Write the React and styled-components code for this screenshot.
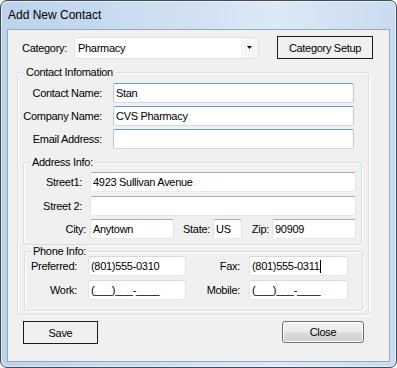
import React from "react";
import styled, { createGlobalStyle } from "styled-components";

const Global = createGlobalStyle`
  html, body { margin: 0; padding: 0; background: #fff; }
  body { font-family: "Liberation Sans", Arial, sans-serif; color: #000; }
  * { box-sizing: border-box; }
`;

const Window = styled.div`
  width: 397px;
  height: 368px;
  border: 1px solid #3e4a58;
  border-radius: 7px;
  background: linear-gradient(to right, #bcd3eb 0%, #cfe0f2 45%, #dce9f6 70%, #c8dbef 100%);
  box-shadow: inset 0 0 0 1px rgba(255, 255, 255, 0.55);
  padding: 0 6px 5px;
  display: flex;
  flex-direction: column;
  overflow: hidden;
`;

const TitleBar = styled.div`
  height: 28px;
  display: flex;
  align-items: center;
  padding-left: 1px;
  font-size: 12px;
`;

const Client = styled.div`
  flex: 1;
  border: 1px solid #97a9bc;
  background: #f0f0f0;
  font-size: 11px;
  letter-spacing: -0.3px;
`;

const CategoryRow = styled.div`
  display: flex;
  align-items: center;
  height: 23px;
  margin-top: 6px;
  padding-left: 14px;
`;

const CatLabel = styled.div`
  width: 52px;
`;

const Combo = styled.div`
  width: 185px;
  height: 22px;
  border: 1px solid #e3e3e3;
  background: #fff;
  display: flex;
  align-items: center;
  padding-left: 3px;
`;

const ComboText = styled.div`
  flex: 1;
`;

const ArrowBox = styled.div`
  width: 17px;
  height: 100%;
  display: flex;
  align-items: center;
  justify-content: center;
  background: #f7f7f7;
`;

const FlatButton = styled.div`
  width: ${(p) => p.$w}px;
  height: 23px;
  margin-left: ${(p) => p.$ml || 0}px;
  border: 1px solid #1c1c1c;
  background: #f0f0f0;
  display: flex;
  align-items: center;
  justify-content: center;
`;

const RoundButton = styled.div`
  width: 82px;
  height: 22px;
  border: 1px solid #707070;
  border-radius: 3px;
  background: linear-gradient(#f2f2f2 0%, #ebebeb 50%, #dddddd 50%, #cfcfcf 100%);
  box-shadow: inset 0 0 0 1px #fbfbfb;
  display: flex;
  align-items: center;
  justify-content: center;
`;

const Group = styled.div`
  width: ${(p) => p.$w}px;
  margin: ${(p) => p.$m};
  padding-bottom: ${(p) => p.$pb}px;
  border: 1px solid #d5dfe5;
  border-radius: 3px;
  box-shadow: 1px 1px 0 #fff, inset 1px 1px 0 #fff;
`;

const Caption = styled.div`
  width: fit-content;
  margin: -7px 0 0 6px;
  padding: 0 2px;
  line-height: 13px;
  background: #f0f0f0;
`;

const Grid = styled.div`
  display: grid;
  grid-template-columns: ${(p) => p.$cols};
  column-gap: ${(p) => p.$cg || 0}px;
  row-gap: ${(p) => p.$rg}px;
  align-items: center;
  margin-top: ${(p) => p.$mt}px;
`;

const Label = styled.div`
  text-align: right;
  padding-right: ${(p) => (p.$pr === undefined ? 2 : p.$pr)}px;
  white-space: nowrap;
  width: ${(p) => (p.$w ? `${p.$w}px` : "auto")};
  flex: none;
`;

const borders = {
  blue: "#6b9ac6 #b3cde6 #c7dcef #b3cde6",
  gray: "#abadb3 #e2e3ea #e3e9ef #e2e3ea",
  light: "#d6dae0 #e1e4e8 #e5e8ec #e1e4e8",
};

const Field = styled.div`
  width: ${(p) => (p.$w ? `${p.$w}px` : "auto")};
  height: 20px;
  border: 1px solid;
  border-color: ${(p) => borders[p.$v || "gray"]};
  border-radius: 2px;
  background: #fff;
  padding-left: 2px;
  display: flex;
  align-items: center;
  white-space: nowrap;
  overflow: hidden;
  flex: none;
`;

const Caret = styled.span`
  width: 1px;
  height: 13px;
  background: #000;
  margin-left: 1px;
`;

const CityRow = styled.div`
  display: flex;
  align-items: center;
`;

const ButtonRow = styled.div`
  display: flex;
  justify-content: space-between;
  align-items: flex-start;
  margin: 6px 25px 0 15px;
`;

const MASK = "(___)___-____";

export default function App() {
  return (
    <>
      <Global />
      <Window>
        <TitleBar>Add New Contact</TitleBar>
        <Client>
          <CategoryRow>
            <CatLabel>Category:</CatLabel>
            <Combo>
              <ComboText>Pharmacy</ComboText>
              <ArrowBox>
                <svg width="5" height="3" viewBox="0 0 5 3">
                  <polygon points="0,0 5,0 2.5,3" fill="#000" />
                </svg>
              </ArrowBox>
            </Combo>
            <FlatButton $w={96} $ml={18}>Category Setup</FlatButton>
          </CategoryRow>

          <Group $w={352} $m="13px 0 0 9px" $pb={3}>
            <Caption>Contact Infomation</Caption>
            <Grid $cols="86px 241px" $cg={9} $rg={3} $mt={4}>
              <Label>Contact Name:</Label>
              <Field $v="blue">Stan</Field>
              <Label>Company Name:</Label>
              <Field $v="blue">CVS Pharmacy</Field>
              <Label>Email Address:</Label>
              <Field $v="blue" />
            </Grid>

            <Group $w={339} $m="13px 0 0 5px" $pb={5}>
              <Caption>Address Info:</Caption>
              <Grid $cols="64px 266px" $cg={2} $rg={3.5} $mt={3}>
                <Label $pr={6}>Street1:</Label>
                <Field>4923 Sullivan Avenue</Field>
                <Label $pr={6}>Street 2:</Label>
                <Field />
                <Label>City:</Label>
                <CityRow>
                  <Field $w={84}>Anytown</Field>
                  <Label $w={39} $pr={3}>State:</Label>
                  <Field $w={29}>US</Field>
                  <Label $w={30} $pr={3}>Zip:</Label>
                  <Field $w={84}>90909</Field>
                </CityRow>
              </Grid>
            </Group>

            <Group $w={339} $m="6px 0 0 6px" $pb={10}>
              <Caption>Phone Info:</Caption>
              <Grid $cols="63px 98px 63px 99px" $rg={4} $mt={-2}>
                <Label $pr={11}>Preferred:</Label>
                <Field $v="light">(801)555-0310</Field>
                <Label $pr={9}>Fax:</Label>
                <Field $v="light">
                  (801)555-0311
                  <Caret />
                </Field>
                <Label $pr={11}>Work:</Label>
                <Field $v="light">{MASK}</Field>
                <Label $pr={9}>Mobile:</Label>
                <Field $v="light">{MASK}</Field>
              </Grid>
            </Group>
          </Group>

          <ButtonRow>
            <FlatButton $w={75}>Save</FlatButton>
            <RoundButton>Close</RoundButton>
          </ButtonRow>
        </Client>
      </Window>
    </>
  );
}
